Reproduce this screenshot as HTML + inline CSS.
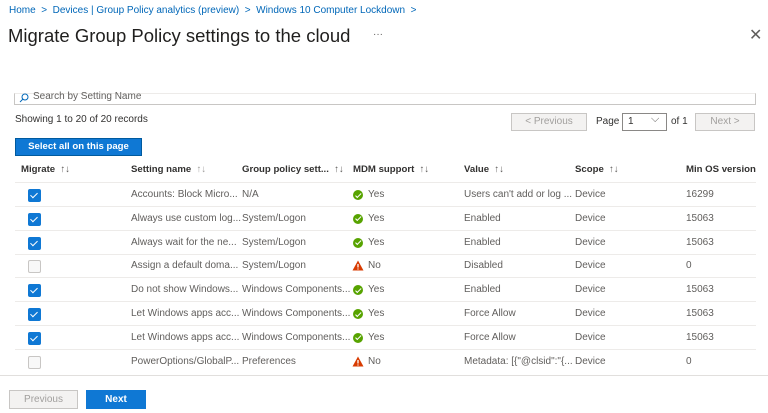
<!DOCTYPE html>
<html><head><style>
*{margin:0;padding:0;box-sizing:border-box}
body{width:768px;height:413px;background:#fff;font-family:"Liberation Sans",sans-serif;color:#323130;position:relative;overflow:hidden;font-size:10px}
.a{position:absolute;white-space:nowrap}
.bc{color:#0067b8;font-size:10px;top:5px}
.hline{position:absolute;left:15px;width:741px;height:1px;background:#edebe9}
.cb{position:absolute;left:28px;width:13px;height:13px;border-radius:2px}
.on{background:#0f78d4}
.on:after{content:"";position:absolute;left:4px;top:2px;width:3px;height:6px;border:solid #fff;border-width:0 1.3px 1.3px 0;transform:rotate(45deg)}
.off{border:1px solid #c8c6c4;background:#f8f8f8}
.g{width:10px;height:10px;border-radius:50%;background:#57a300;position:absolute}
.g:after{content:"";position:absolute;left:3.5px;top:1.5px;width:2px;height:4.5px;border:solid #fff;border-width:0 1.5px 1.5px 0;transform:rotate(45deg)}
.t{color:#605e5c}
.hd{font-weight:bold;color:#323130;font-size:9.6px}
.btn{position:absolute;border:1px solid #c8c6c4;background:#f3f2f1;color:#a19f9d;text-align:center;font-size:10px}
</style></head><body>
<div class="a bc" style="left:9px">Home &nbsp;&gt;&nbsp; Devices | Group Policy analytics (preview) &nbsp;&gt;&nbsp; Windows 10 Computer Lockdown &nbsp;&gt;</div>
<div class="a" style="left:8px;top:25px;font-size:18.5px;color:#201f1e">Migrate Group Policy settings to the cloud</div>
<div class="a" style="left:373px;top:29px;font-size:10px;color:#605e5c">···</div>
<div class="a" style="left:749px;top:25px;font-size:16px;color:#605e5c">✕</div>
<div style="position:absolute;left:14px;top:93px;width:742px;height:12px;border:1px solid #c8c6c4;border-top-color:#edebe9"></div>
<svg class="a" style="left:19px;top:93px" width="10" height="10" viewBox="0 0 10 10"><circle cx="6" cy="4" r="3" fill="none" stroke="#0067b8" stroke-width="1"/><path d="M4 6L1 9" stroke="#0067b8" stroke-width="1"/></svg>
<div class="a t" style="left:33px;top:91px">Search by Setting Name</div>
<div class="a" style="left:15px;top:114px">Showing 1 to 20 of 20 records</div>
<div class="btn" style="left:511px;top:113px;width:76px;height:18px;line-height:16px">&lt; Previous</div>
<div class="a" style="left:596px;top:116px">Page</div>
<div style="position:absolute;left:622px;top:113px;width:45px;height:18px;border:1px solid #8a8886"></div>
<div class="a" style="left:628px;top:116px">1</div>
<div class="a" style="left:651px;top:113px;font-size:11px;color:#605e5c">⌵</div>
<div class="a" style="left:671px;top:116px">of 1</div>
<div class="btn" style="left:695px;top:113px;width:60px;height:18px;line-height:16px">Next &gt;</div>
<div style="position:absolute;left:15px;top:138px;width:127px;height:18px;background:#0f78d4;border:1px solid #005a9e;color:#fff;font-weight:bold;text-align:center;line-height:16px;font-size:9.6px">Select all on this page</div>

<div class="a hd" style="left:21px;top:164px">Migrate <span style="font-weight:normal;color:#605e5c">&nbsp;↑↓</span></div>
<div class="a hd" style="left:131px;top:164px">Setting name <span style="font-weight:normal;color:#a19f9d">&nbsp;↑↓</span></div>
<div class="a hd" style="left:242px;top:164px">Group policy sett... <span style="font-weight:normal;color:#605e5c">&nbsp;↑↓</span></div>
<div class="a hd" style="left:353px;top:164px">MDM support <span style="font-weight:normal;color:#605e5c">&nbsp;↑↓</span></div>
<div class="a hd" style="left:464px;top:164px">Value <span style="font-weight:normal;color:#605e5c">&nbsp;↑↓</span></div>
<div class="a hd" style="left:575px;top:164px">Scope <span style="font-weight:normal;color:#605e5c">&nbsp;↑↓</span></div>
<div class="a hd" style="left:686px;top:164px">Min OS version</div>
<div class="hline" style="top:182px"></div>

<div id="rows"></div>
<script>
var d=[[1,"Accounts: Block Micro...","N/A",1,"Users can't add or log ...","16299"],
[1,"Always use custom log...","System/Logon",1,"Enabled","15063"],
[1,"Always wait for the ne...","System/Logon",1,"Enabled","15063"],
[0,"Assign a default doma...","System/Logon",0,"Disabled","0"],
[1,"Do not show Windows...","Windows Components...",1,"Enabled","15063"],
[1,"Let Windows apps acc...","Windows Components...",1,"Force Allow","15063"],
[1,"Let Windows apps acc...","Windows Components...",1,"Force Allow","15063"],
[0,"PowerOptions/GlobalP...","Preferences",0,"Metadata: [{\"@clsid\":\"{...","0"]];
var h="";d.forEach(function(r,i){var y=189+i*23.8;
h+='<div class="cb '+(r[0]?'on':'off')+'" style="top:'+(y)+'px"></div>';
h+='<div class="a t" style="left:131px;top:'+y+'px">'+r[1]+'</div>';
h+='<div class="a t" style="left:242px;top:'+y+'px">'+r[2]+'</div>';
h+=r[3]?'<div class="g" style="left:353px;top:'+(y+1)+'px"></div><div class="a t" style="left:368px;top:'+y+'px">Yes</div>':'<svg class="a" style="left:352px;top:'+y+'px" width="12" height="11" viewBox="0 0 12 11"><path d="M6 0.5L11.5 10.5H0.5Z" fill="#d83b01"/><path d="M6 4v3.5M6 8.5v1" stroke="#fff" stroke-width="1.3"/></svg><div class="a t" style="left:368px;top:'+y+'px">No</div>';
h+='<div class="a t" style="left:464px;top:'+y+'px">'+r[4].replace(/</g,"&lt;")+'</div>';
h+='<div class="a t" style="left:575px;top:'+y+'px">Device</div>';
h+='<div class="a t" style="left:686px;top:'+y+'px">'+r[5]+'</div>';
if(i<7)h+='<div class="hline" style="top:'+(y+17)+'px"></div>';});
document.getElementById("rows").innerHTML=h;
</script>
<div style="position:absolute;left:0;top:375px;width:768px;height:1px;background:#e1dfdd"></div>
<div class="btn" style="left:9px;top:390px;width:69px;height:19px;line-height:17px">Previous</div>
<div style="position:absolute;left:86px;top:390px;width:60px;height:19px;background:#0f78d4;color:#fff;font-weight:bold;text-align:center;line-height:19px;font-size:10px">Next</div>
</body></html>
